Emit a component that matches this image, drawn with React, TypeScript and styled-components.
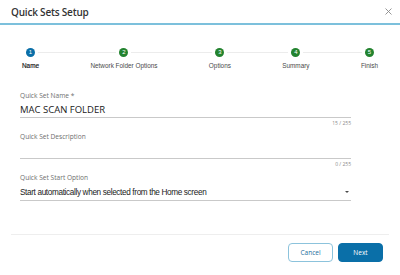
import React from 'react';
import styled, { createGlobalStyle } from 'styled-components';

const GlobalStyle = createGlobalStyle`
    html, body {
        margin: 0;
        padding: 0;
        background: #ffffff;
    }
    body {
        font-family: "Open Sans", "Liberation Sans", sans-serif;
        color: #1f1f1f;
    }
`;

const steps = [
    { n: 1, label: 'Name', active: true },
    { n: 2, label: 'Network Folder Options', active: false },
    { n: 3, label: 'Options', active: false },
    { n: 4, label: 'Summary', active: false },
    { n: 5, label: 'Finish', active: false },
];

const CloseIcon = () => (
    <svg width="7" height="7" viewBox="0 0 7 7">
        <path d="M0.5 0.5 L6.5 6.5 M6.5 0.5 L0.5 6.5" stroke="#8a8a8a" strokeWidth="0.9" fill="none" />
    </svg>
);

const App: React.FC = () => {
    return (
        <Dialog>
            <GlobalStyle />
            <Header>
                <Title>Quick Sets Setup</Title>
                <CloseButton>
                    <CloseIcon />
                </CloseButton>
            </Header>

            <Stepper>
                <Track />
                {steps.map(s => (
                    <Step key={s.n}>
                        <Circle active={s.active}>{s.n}</Circle>
                        <StepLabel active={s.active}>{s.label}</StepLabel>
                    </Step>
                ))}
            </Stepper>

            <Form>
                <Field>
                    <Label>Quick Set Name *</Label>
                    <Value>MAC SCAN FOLDER</Value>
                    <Counter>15 / 255</Counter>
                </Field>
                <Field>
                    <Label>Quick Set Description</Label>
                    <Value></Value>
                    <Counter>0 / 255</Counter>
                </Field>
                <Field>
                    <Label>Quick Set Start Option</Label>
                    <Value select>
                        <span>Start automatically when selected from the Home screen</span>
                        <Caret />
                    </Value>
                </Field>
            </Form>

            <Footer>
                <Button>Cancel</Button>
                <Button primary>Next</Button>
            </Footer>
        </Dialog>
    );
};

export default App;

const Dialog = styled.div`
    width: 400px;
    height: 275px;
    display: flex;
    flex-direction: column;
    overflow: hidden;
`;

const Header = styled.div`
    height: 23px;
    padding: 0 8px 0 11px;
    display: flex;
    align-items: center;
    justify-content: space-between;
    border-bottom: 2px solid #7cc0dc;
`;

const Title = styled.div`
    font-size: 10px;
    font-weight: 600;
    color: #333333;
    letter-spacing: -0.2px;
`;

const CloseButton = styled.div`
    width: 7px;
    height: 7px;
    display: flex;
    margin-top: -1px;
`;

const Stepper = styled.div`
    position: relative;
    display: flex;
    justify-content: space-between;
    padding: 23px 22px 0 22px;
`;

const Track = styled.div`
    position: absolute;
    top: 27px;
    left: 30px;
    right: 31px;
    height: 1px;
    background: #ececec;
`;

const Step = styled.div`
    position: relative;
    display: flex;
    flex-direction: column;
    align-items: center;
`;

const Circle = styled.div<{ active: boolean }>`
    width: 9px;
    height: 9px;
    border-radius: 50%;
    background: ${p => (p.active ? '#0a6fa8' : '#23832f')};
    box-shadow: 0 0 0 3px #ffffff;
    color: #ffffff;
    font-family: "Liberation Sans", sans-serif;
    font-size: 6px;
    line-height: 9px;
    text-align: center;
`;

const StepLabel = styled.div<{ active: boolean }>`
    margin-top: 4px;
    font-family: "Liberation Sans", sans-serif;
    font-size: 6.4px;
    line-height: 9px;
    color: ${p => (p.active ? '#111111' : '#4a4a4a')};
    -webkit-text-stroke: ${p => (p.active ? '0.15px #111' : '0')};
    white-space: nowrap;
`;

const Form = styled.div`
    padding: 22px 49px 0 20px;
    display: flex;
    flex-direction: column;
    gap: 6px;
`;

const Field = styled.div`
    display: flex;
    flex-direction: column;
`;

const Label = styled.div`
    font-size: 6.6px;
    line-height: 8px;
    color: #6e6e6e;
`;

const Value = styled.div<{ select?: boolean }>`
    height: 16px;
    border-bottom: 1px solid #c9c9c9;
    display: flex;
    align-items: center;
    justify-content: space-between;
    font-family: ${p => (p.select ? '"Liberation Sans", sans-serif' : '"Open Sans", sans-serif')};
    font-size: ${p => (p.select ? '8.2px' : '9.5px')};
    letter-spacing: ${p => (p.select ? '-0.35px' : '0')};
    color: #1a1a1a;
    padding-top: ${p => (p.select ? '2px' : '1px')};
`;

const Caret = styled.div`
    width: 0;
    height: 0;
    margin-right: 2px;
    border-left: 2px solid transparent;
    border-right: 2px solid transparent;
    border-top: 2.5px solid #4a4a4a;
`;

const Counter = styled.div`
    align-self: flex-end;
    margin-top: 1px;
    font-size: 5px;
    line-height: 8px;
    color: #8a8a8a;
`;

const Footer = styled.div`
    margin: auto 11px 13px 11px;
    padding-top: 8px;
    border-top: 1px solid #eeeeee;
    display: flex;
    justify-content: flex-end;
    gap: 5px;
    padding-right: 6px;
`;

const Button = styled.div<{ primary?: boolean }>`
    width: 43px;
    height: 17px;
    border-radius: 4px;
    display: flex;
    align-items: center;
    justify-content: center;
    font-size: 6.5px;
    font-weight: 500;
    background: ${p => (p.primary ? '#0a6fa8' : '#ffffff')};
    color: ${p => (p.primary ? '#ffffff' : '#1b6e9c')};
    border: 1px solid ${p => (p.primary ? '#0a6fa8' : '#8cc3dc')};
`;
